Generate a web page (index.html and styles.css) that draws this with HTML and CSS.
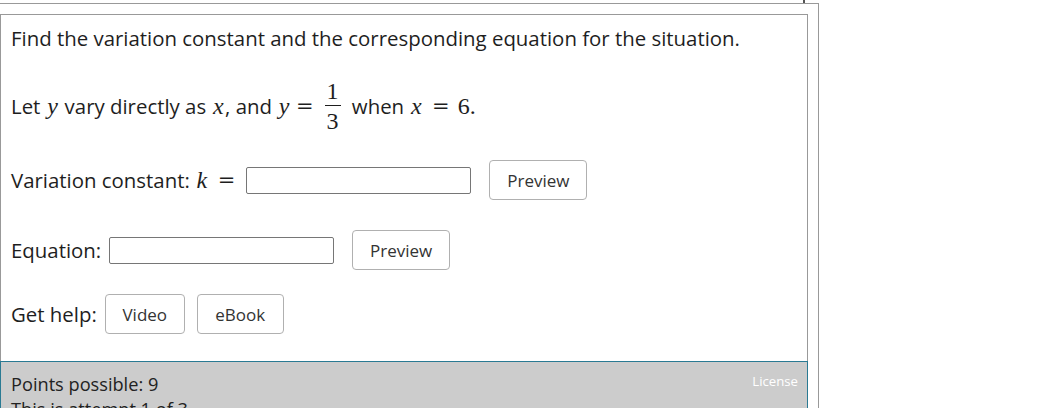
FILE: index.html
```html
<!DOCTYPE html>
<html>
<head>
<meta charset="utf-8">
<link rel="stylesheet" href="styles.css">
</head>
<body>
<div class="frame">
  <span class="tick"></span>
  <div class="card">
    <div class="qbody">
      <p class="title">Find the variation constant and the corresponding equation for the situation.</p>
      <p class="stmt">Let&nbsp;<span class="mi">y</span>&nbsp;vary directly as&nbsp;<span class="mi">x</span>, and&nbsp;<span class="mi">y</span><span class="mo">=</span><span class="frac"><span class="num">1</span><span class="den">3</span></span>&nbsp;when&nbsp;<span class="mi">x</span><span class="mo mo-wide">=</span><span class="mn">6.</span></p>
      <div class="row r1">
        <span class="label">Variation constant:&nbsp;<span class="mi">k</span><span class="mo mo-end">=</span></span>
        <input class="ans" type="text">
        <button class="btn prev">Preview</button>
      </div>
      <div class="row r2">
        <span class="label">Equation:</span>
        <input class="ans eq" type="text">
        <button class="btn prev">Preview</button>
      </div>
      <div class="row r3">
        <span class="label">Get help:</span>
        <button class="btn help video">Video</button>
        <button class="btn help ebook">eBook</button>
      </div>
    </div>
    <div class="footer">
      <div class="info">
        <div>Points possible: 9</div>
        <div>This is attempt 1 of 3</div>
      </div>
      <a class="license">License</a>
    </div>
  </div>
</div>
</body>
</html>
```
FILE: styles.css
```css
html, body {
  margin: 0;
  padding: 0;
  background: #fff;
  overflow: hidden;
}
body {
  font-family: "Open Sans", "Noto Sans", sans-serif;
  color: #1e1e1e;
}
.frame {
  position: relative;
  width: 808px;
  margin-top: 3px;
  border-top: 1px solid #999;
  border-right: 1px solid #999;
  padding: 10px 10px 0 0;
}
.tick {
  position: absolute;
  left: 803px;
  top: -4px;
  width: 2px;
  height: 3px;
  background: #555;
}
.card {
  width: 808px;
}
.qbody {
  border: 1px solid #999;
  border-bottom: none;
  padding: 10px 10px 27px 10px;
  font-size: 20.4px;
}
.title {
  margin: 0;
  line-height: 27px;
}
.stmt {
  margin: 28px 0 0;
  height: 52px;
  display: flex;
  align-items: center;
  line-height: 27px;
}
.mi {
  font-family: "Liberation Serif", "DejaVu Serif", serif;
  font-style: italic;
  font-size: 24px;
  padding: 0 1.5px;
}
.mo {
  font-family: "DejaVu Serif", "Liberation Serif", serif;
  font-size: 21px;
  margin: 0 5px;
}
.mo-wide {
  margin: 0 8px 0 9px;
}
.mo-end {
  margin: 0 0 0 9px;
}
.mn {
  font-family: "Liberation Serif", "DejaVu Serif", serif;
  font-size: 24px;
}
.frac {
  display: inline-flex;
  flex-direction: column;
  align-items: center;
  margin: 0 6px 0 6px;
  font-family: "Liberation Serif", "DejaVu Serif", serif;
  font-size: 24px;
  line-height: 22px;
  padding-top: 0;
}
.num {
  padding: 0 2px 3px;
  border-bottom: 1.5px solid #1e1e1e;
}
.den {
  padding-top: 4px;
}
.row {
  display: flex;
  align-items: center;
  height: 40px;
}
.r1 { margin-top: 28px; }
.r2 { margin-top: 30px; }
.r3 { margin-top: 24px; }
.label {
  display: inline-flex;
  align-items: center;
  white-space: nowrap;
}
.ans {
  box-sizing: border-box;
  width: 225px;
  height: 27px;
  border: 1px solid #767676;
  border-radius: 2px;
  margin: 0 0 0 11px;
  padding: 0 4px;
  font-family: "Open Sans", sans-serif;
  font-size: 15px;
}
.eq {
  margin-left: 8px;
}
.btn {
  box-sizing: border-box;
  height: 40px;
  background: #fff;
  border: 1px solid #b0b0b0;
  border-radius: 4px;
  font-family: "Open Sans", "Noto Sans", sans-serif;
  font-size: 17px;
  color: #333;
  padding: 0;
}
.prev {
  margin-left: 18px;
  width: 98px;
}
.video {
  margin-left: 8px;
  width: 80px;
}
.ebook {
  margin-left: 12px;
  width: 87px;
}
.footer {
  box-sizing: border-box;
  width: 808px;
  background: #cccccc;
  border: 1px solid #2a7a93;
  border-bottom: none;
  padding: 10px 9px 0 10px;
  height: 60px;
  display: flex;
  justify-content: space-between;
  align-items: flex-start;
}
.info {
  font-size: 18.2px;
  line-height: 25px;
  color: #222;
}
.license {
  font-size: 13.2px;
  color: #fff;
  margin-top: 1px;
  line-height: 16px;
}
```
